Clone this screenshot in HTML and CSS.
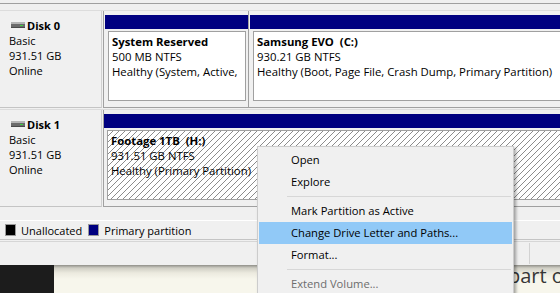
FILE: index.html
```html
<!DOCTYPE html>
<html>
<head>
<meta charset="utf-8">
<link rel="stylesheet" href="styles.css">
</head>
<body>
<div class="screen">
  <div class="topline"></div>
  <div class="disk">
    <div class="label">
      <div class="name"><svg class="hdd" width="14" height="6" viewBox="0 0 14 6"><rect x="0" y="0" width="14" height="6" fill="#6a6a6a"/><rect x="0" y="0" width="14" height="2" fill="#b4b4b4"/><rect x="0" y="5" width="14" height="1" fill="#4a4a4a"/><rect x="9" y="3" width="3" height="1" fill="#3fd23f"/></svg><b>Disk 0</b></div>
      <div>Basic</div>
      <div>931.51 GB</div>
      <div>Online</div>
    </div>
    <div class="parts">
      <div class="part part-sys">
        <div class="bar"></div>
        <div class="box">
          <b>System Reserved</b>
          <div>500 MB NTFS</div>
          <div>Healthy (System, Active,</div>
        </div>
      </div>
      <div class="part part-fill">
        <div class="bar"></div>
        <div class="box">
          <b>Samsung EVO&nbsp; (C:)</b>
          <div>930.21 GB NTFS</div>
          <div>Healthy (Boot, Page File, Crash Dump, Primary Partition)</div>
        </div>
      </div>
    </div>
  </div>
  <div class="disk disk-second">
    <div class="label">
      <div class="name"><svg class="hdd" width="14" height="6" viewBox="0 0 14 6"><rect x="0" y="0" width="14" height="6" fill="#6a6a6a"/><rect x="0" y="0" width="14" height="2" fill="#b4b4b4"/><rect x="0" y="5" width="14" height="1" fill="#4a4a4a"/><rect x="9" y="3" width="3" height="1" fill="#3fd23f"/></svg><b>Disk 1</b></div>
      <div>Basic</div>
      <div>931.51 GB</div>
      <div>Online</div>
    </div>
    <div class="parts">
      <div class="part part-fill part-first">
        <div class="bar"></div>
        <div class="box hatch">
          <b>Footage 1TB&nbsp; (H:)</b>
          <div>931.51 GB NTFS</div>
          <div>Healthy (Primary Partition)</div>
        </div>
      </div>
    </div>
  </div>
  <div class="legend">
    <div class="lg-item"><span class="swatch swatch-black"></span><span>Unallocated</span></div>
    <div class="lg-item"><span class="swatch swatch-navy"></span><span>Primary partition</span></div>
  </div>
  <div class="status">
    <div class="status-main"></div>
    <div class="status-end"></div>
  </div>
  <div class="desktop">
    <div class="dark"></div>
    <div class="cream"><span class="bigtext">part of</span></div>
  </div>
</div>
<div class="menu">
  <div class="item">Open</div>
  <div class="item">Explore</div>
  <div class="sep"></div>
  <div class="item">Mark Partition as Active</div>
  <div class="item active">Change Drive Letter and Paths...</div>
  <div class="item">Format...</div>
  <div class="sep"></div>
  <div class="item disabled">Extend Volume...</div>
</div>
</body>
</html>
```
FILE: styles.css
```css
html, body {
  margin: 0;
  padding: 0;
}
body {
  width: 560px;
  height: 293px;
  overflow: hidden;
  position: relative;
  background: #f0f0f0;
  font-family: "Open Sans", "Noto Sans", sans-serif;
  font-size: 11px;
  line-height: 15px;
  color: #000;
}
.screen {
  width: 600px;
}
.topline {
  margin-top: 3px;
  height: 7px;
  box-sizing: border-box;
  border-top: 1px solid #a0a0a0;
}
.disk {
  display: flex;
  height: 98px;
  box-sizing: border-box;
  border-top: 1px solid #dcdcdc;
}
.disk-second {
  margin-top: 1px;
}
.label {
  width: 102px;
  box-sizing: border-box;
  border-right: 1px solid #d0d0d0;
  border-bottom: 1px solid #c4c4c4;
  padding: 6px 0 0 9px;
}
.name {
  display: flex;
  align-items: center;
  height: 16px;
}
.hdd {
  margin-left: 2px;
  margin-right: 2px;
  flex: none;
}
.parts {
  flex: 1;
  display: flex;
  margin-left: 1px;
  border-left: 1px solid #a0a0a0;
  border-bottom: 1px solid #a0a0a0;
}
.part {
  display: flex;
  flex-direction: column;
  padding: 4px 0 6px 1px;
  box-sizing: border-box;
  border-right: 1px solid #a0a0a0;
}
.part-sys {
  width: 145px;
}
.part-fill {
  flex: 1;
}
.part-first {
  padding-left: 0;
}
.bar {
  height: 14px;
  background: #000080;
}
.box {
  margin: 2px 2px 0 3px;
  height: 70px;
  box-sizing: border-box;
  border: 1px solid #a0a0a0;
  background: #fff;
  padding: 2px 3px;
  font-size: 11.35px;
  white-space: nowrap;
  overflow: hidden;
}
.box b {
  display: block;
}
.hatch {
  background: repeating-linear-gradient(135deg, #ffffff 0, #ffffff 3.4px, #8c8c8c 3.4px, #8c8c8c 4.24px);
}
.legend {
  margin-top: 13px;
  height: 20px;
  box-sizing: border-box;
  border-top: 1px solid #fff;
  border-bottom: 1px solid #c4c4c4;
  display: flex;
  align-items: center;
  padding-left: 5px;
  gap: 6px;
}
.lg-item {
  display: flex;
  align-items: center;
  gap: 5px;
}
.swatch {
  width: 11px;
  height: 12px;
  box-sizing: border-box;
  border: 1px solid #9a9a9a;
}
.swatch-black { background: #000; }
.swatch-navy { background: #000080; }
.status {
  margin-top: 1px;
  height: 24px;
  box-sizing: border-box;
  border-top: 1px solid #d6d6d6;
  display: flex;
  padding: 1px 0 1px 0;
}
.status-main {
  width: 529px;
  border-right: 1px solid #d2d2d2;
}
.status-end {
  flex: 1;
}
.desktop {
  display: flex;
  height: 28px;
}
.dark {
  width: 54px;
  background: #1c1c1c;
}
.cream {
  flex: 1;
  background: linear-gradient(#8f8e88 0, #cfcec4 3px, #eceadf 8px, #f7f6ec 14px);
  padding: 2px 0 0 454px;
  white-space: nowrap;
  overflow: hidden;
}
.bigtext {
  font-size: 20px;
  line-height: 18px;
  color: #363636;
}
.menu {
  position: absolute;
  left: 257px;
  top: 146px;
  width: 257px;
  box-sizing: border-box;
  background: #f0f0f0;
  border: 1px solid #cccccc;
  padding: 2px 0;
  box-shadow: 2px 2px 3px rgba(0, 0, 0, 0.35);
}
.item {
  height: 22px;
  line-height: 22px;
  margin: 0 1px;
  padding-left: 32px;
  font-size: 11.2px;
  white-space: nowrap;
}
.item.active {
  background: #91c9f7;
}
.item.disabled {
  color: #6d6d6d;
}
.sep {
  height: 1px;
  background: #d7d7d7;
  margin: 3px 2px 3px 29px;
}
```
